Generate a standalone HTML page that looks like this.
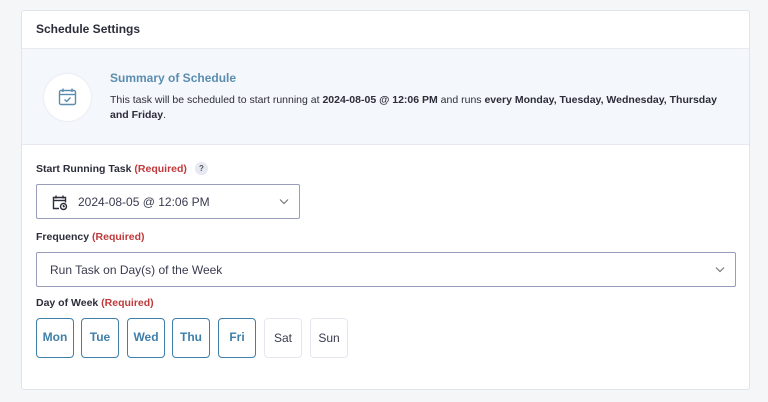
<!DOCTYPE html>
<html><head><meta charset="utf-8"><style>
*{box-sizing:border-box;margin:0;padding:0}
body{width:768px;height:402px;background:#f5f6f8;font-family:"Liberation Sans",sans-serif;color:#2c2d3a;position:relative;overflow:hidden}
.card{position:absolute;left:21px;top:10px;width:729px;height:380px;background:#fff;border:1px solid #e2e4ea;border-radius:3px}
.hd{height:38px;border-bottom:1px solid #e8eaf0;padding:11px 14px;font-size:12px;font-weight:bold;color:#2c2d3a}
.sum{position:absolute;left:0;top:38px;width:727px;height:96px;background:#f4f7fb;border-bottom:1px solid #e6e9ef}
.circ{position:absolute;left:22px;top:25px;width:47px;height:47px;border-radius:50%;background:#fff;box-shadow:0 0 2px #dde}
.st{position:absolute;left:88px;top:22px;font-size:12px;color:#5b8db0;font-weight:bold}
.sx{position:absolute;left:88px;top:44px;width:620px;font-size:10.5px;line-height:15px;color:#2c2d3a}
.lbl{position:absolute;left:14px;font-size:10.5px;font-weight:bold;color:#2c2d3a}
.req{color:#c0393b}
.inp{position:absolute;border:1px solid #9a9cbb;border-radius:2px;background:#fff;font-size:12px;color:#3a3b4f}
.chev{position:absolute;right:10px;top:13px}
.day{position:absolute;top:307px;width:38px;height:40px;border:1.5px solid #3f7fa8;border-radius:4px;font-size:12px;font-weight:bold;color:#3f7fa8;text-align:center;line-height:37px}
.off{border:1px solid #e6e7ee;color:#3a3b4f;font-weight:normal;line-height:38px}
.q{display:inline-block;width:13px;height:13px;border-radius:50%;background:#e6e8f2;font-size:8px;text-align:center;line-height:13px;color:#555;margin-left:8px;vertical-align:1px}
</style></head><body>
<div class="card">
<div class="hd">Schedule Settings</div>
<div class="sum">
<div class="circ"><svg width="47" height="47" viewBox="0 0 47 47"><g fill="none" stroke="#5b8db0" stroke-width="1.4"><rect x="15.5" y="16.5" width="16" height="14" rx="1.5"/><line x1="15.5" y1="20.5" x2="31.5" y2="20.5"/><line x1="19" y1="14.5" x2="19" y2="18"/><line x1="28" y1="14.5" x2="28" y2="18"/><path d="M20.5 25.5l2.2 2 3.8-4"/></g></svg></div>
<div class="st">Summary of Schedule</div>
<div class="sx">This task will be scheduled to start running at <b>2024-08-05 @ 12:06 PM</b> and runs <b>every Monday, Tuesday, Wednesday, Thursday and Friday</b>.</div>
</div>
<div class="lbl" style="top:151px">Start Running Task <span class="req">(Required)</span><span class="q">?</span></div>
<div class="inp" style="left:14px;top:173px;width:264px;height:35px">
<svg style="position:absolute;left:14px;top:9px" width="17" height="17" viewBox="0 0 17 17"><g fill="none" stroke="#2c2d3a" stroke-width="1.4"><path d="M8 14.5H2.5v-11h12v5"/><line x1="2.5" y1="6.5" x2="14.5" y2="6.5"/><line x1="5" y1="1.5" x2="5" y2="4.5"/><line x1="12" y1="1.5" x2="12" y2="4.5"/><circle cx="12.5" cy="12.5" r="3"/><path d="M12.5 11v1.6h1.3"/></g></svg>
<span style="position:absolute;left:41px;top:10px">2024-08-05 @ 12:06 PM</span>
<svg class="chev" width="10" height="7" viewBox="0 0 10 7"><path d="M1 1.5l4 4 4-4" fill="none" stroke="#777" stroke-width="1.2"/></svg>
</div>
<div class="lbl" style="top:220px">Frequency <span class="req">(Required)</span></div>
<div class="inp" style="left:14px;top:241px;width:700px;height:35px">
<span style="position:absolute;left:13px;top:10px">Run Task on Day(s) of the Week</span>
<svg class="chev" width="10" height="7" viewBox="0 0 10 7"><path d="M1 1.5l4 4 4-4" fill="none" stroke="#777" stroke-width="1.2"/></svg>
</div>
<div class="lbl" style="top:286px">Day of Week <span class="req">(Required)</span></div>
<div class="day" style="left:14px">Mon</div>
<div class="day" style="left:59px">Tue</div>
<div class="day" style="left:105px">Wed</div>
<div class="day" style="left:150px">Thu</div>
<div class="day" style="left:196px">Fri</div>
<div class="day off" style="left:242px">Sat</div>
<div class="day off" style="left:288px">Sun</div>
</div>
</body></html>
